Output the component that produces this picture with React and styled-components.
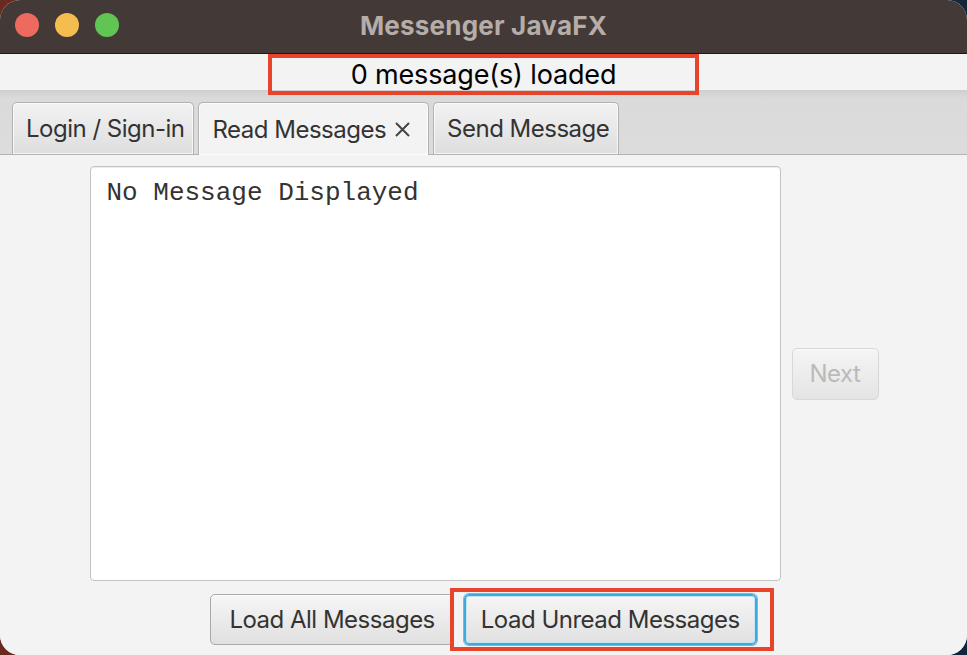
import styled, { createGlobalStyle } from "styled-components";

const GlobalStyle = createGlobalStyle`
  html, body {
    margin: 0;
    padding: 0;
    width: 967px;
    height: 655px;
    overflow: hidden;
    background: linear-gradient(90deg, #6a2a20 0%, #3b2624 50%, #14263c 100%);
  }
  #root {
    width: 967px;
    height: 655px;
  }
`;

const Window = styled.div`
  width: 967px;
  height: 655px;
  border-radius: 20px;
  overflow: hidden;
  background: #f3f3f3;
  display: flex;
  flex-direction: column;
  font-family: Inter, "Open Sans", sans-serif;
`;

const TitleBar = styled.div`
  height: 53px;
  flex: none;
  background: #433a37;
  border-bottom: 1px solid #1d1716;
  position: relative;
  display: flex;
  align-items: center;
  justify-content: center;
`;

const Lights = styled.div`
  position: absolute;
  left: 15px;
  top: 13px;
  display: flex;
  gap: 16px;
`;

const Light = styled.span`
  width: 24px;
  height: 24px;
  border-radius: 50%;
  background: ${(p) => p.color};
`;

const Title = styled.div`
  color: #b6aca8;
  font-weight: 700;
  font-size: 26px;
  letter-spacing: 0.2px;
  margin-top: -3px;
`;

const StatusBar = styled.div`
  height: 36px;
  flex: none;
  background: #f3f3f3;
  display: flex;
  justify-content: center;
  position: relative;
  z-index: 2;
`;

const StatusLabel = styled.div`
  position: relative;
  width: 423px;
  height: 33px;
  margin-top: 4px;
  display: flex;
  align-items: center;
  justify-content: center;
  font-size: 27px;
  color: #000;
  letter-spacing: -0.15px;
`;

const Highlight = styled.span`
  position: absolute;
  top: ${(p) => p.t}px;
  left: ${(p) => p.l}px;
  right: ${(p) => p.r}px;
  bottom: ${(p) => p.b}px;
  border: 4px solid #e8442b;
  pointer-events: none;
`;

const TabHeader = styled.div`
  height: 65px;
  flex: none;
  background: linear-gradient(#cfcfcf 0px, #dadada 8px, #dcdcdc 100%);
  border-bottom: 1px solid #b3b3b3;
  display: flex;
  align-items: flex-end;
  gap: 4px;
  padding-left: 12px;
  box-sizing: border-box;
`;

const Tab = styled.div`
  box-sizing: border-box;
  border: 1px solid #b2b2b2;
  border-bottom: none;
  border-radius: 5px 5px 0 0;
  padding: ${(p) => (p.selected ? "0 17px 0 13px" : "0 9px 0 13px")};
  display: flex;
  align-items: center;
  gap: 8px;
  font-size: 24px;
  color: #333;
  letter-spacing: -0.5px;
  background: ${(p) =>
    p.selected ? "#f3f3f3" : "linear-gradient(#f2f2f2, #dedede)"};
  margin-bottom: ${(p) => (p.selected ? "-1px" : "0")};
  height: ${(p) => (p.selected ? "53px" : "52px")};
  box-shadow: inset 0 0 0 1px rgba(255, 255, 255, 0.7);
`;

const Content = styled.div`
  flex: 1;
  display: flex;
  flex-direction: column;
  align-items: center;
  padding-top: 11px;
  background: #f3f3f3;
`;

const Row = styled.div`
  display: flex;
  align-items: center;
  gap: 11px;
  margin-left: 1px;
`;

const TextArea = styled.div`
  width: 691px;
  height: 415px;
  box-sizing: border-box;
  background: #fff;
  border: 1px solid #c4c4c4;
  border-radius: 4px;
  box-shadow: inset 0 1px 1px rgba(0, 0, 0, 0.08);
  padding: 11px 16px;
  font-family: "Liberation Mono", "DejaVu Sans Mono", monospace;
  font-size: 26px;
  color: #333;
  line-height: 30px;
`;

const Button = styled.button`
  box-sizing: border-box;
  height: ${(p) => (p.small ? "52px" : "51px")};
  padding: 0 ${(p) => (p.focused ? "16px" : "18px")};
  font-family: Inter, "Open Sans", sans-serif;
  font-size: 24px;
  letter-spacing: -0.5px;
  color: ${(p) => (p.disabled ? "#a8a8a8" : "#333")};
  background: linear-gradient(#f6f6f6, #e0e0e0);
  border: 1px solid
    ${(p) => (p.disabled ? "#cfcfcf" : p.focused ? "#3ea9dd" : "#a9a9a9")};
  border-radius: 5px;
  box-shadow: ${(p) =>
    p.focused
      ? "0 0 0 1px #6bbde4, inset 0 0 0 1px #3ea9dd, inset 0 0 0 2px #c4e4f3"
      : "inset 0 1px 0 rgba(255,255,255,0.8)"};
  opacity: ${(p) => (p.disabled ? 0.75 : 1)};
  cursor: default;
  white-space: nowrap;
`;

const NextButton = styled(Button)`
  width: 87px;
  padding: 0;
`;

const Actions = styled.div`
  display: flex;
  gap: 10px;
  margin-top: 13px;
`;

const Marked = styled.div`
  position: relative;
  display: flex;
`;

function CloseIcon() {
  return (
    <svg width="17" height="17" viewBox="0 0 17 17">
      <path d="M2 2 L15 15 M15 2 L2 15" stroke="#444" strokeWidth="2" fill="none" />
    </svg>
  );
}

export default function App() {
  return (
    <>
      <GlobalStyle />
      <Window>
        <TitleBar>
          <Lights>
            <Light color="#ee6a5f" />
            <Light color="#f5bd4f" />
            <Light color="#61c554" />
          </Lights>
          <Title>Messenger JavaFX</Title>
        </TitleBar>
        <StatusBar>
          <StatusLabel>
            0 message(s) loaded
            <Highlight t={-4} l={-4} r={-4} b={-4} />
          </StatusLabel>
        </StatusBar>
        <TabHeader>
          <Tab>Login / Sign-in</Tab>
          <Tab selected>
            Read Messages
            <CloseIcon />
          </Tab>
          <Tab>Send Message</Tab>
        </TabHeader>
        <Content>
          <Row>
            <TextArea>No Message Displayed</TextArea>
            <NextButton disabled small>
              Next
            </NextButton>
          </Row>
          <Actions>
            <Button>Load All Messages</Button>
            <Marked>
              <Button focused>Load Unread Messages</Button>
              <Highlight t={-6} l={-14} r={-17} b={-6} />
            </Marked>
          </Actions>
        </Content>
      </Window>
    </>
  );
}
